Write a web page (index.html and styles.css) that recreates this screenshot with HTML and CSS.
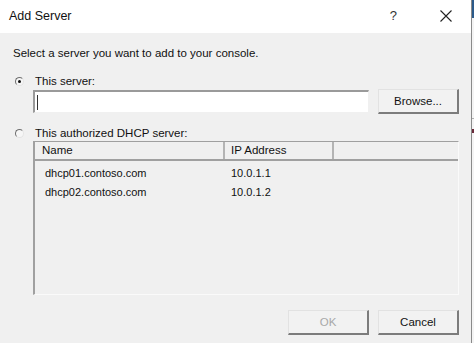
FILE: index.html
```html
<!DOCTYPE html>
<html lang="en">
<head>
  <meta charset="UTF-8">
  <title>Add Server</title>
  <link rel="stylesheet" href="styles.css">
</head>
<body>
  <div class="dialog">
    <!-- title bar -->
    <div class="titlebar">
      <span class="title">Add Server</span>
      <span class="help">?</span>
      <span class="close">
        <svg width="12" height="12" viewBox="0 0 12 12"><path d="M0.5 0.5 L11.5 11.5 M11.5 0.5 L0.5 11.5" stroke="#222" stroke-width="1.1" fill="none"/></svg>
      </span>
    </div>

    <div class="content">
      <p class="intro">Select a server you want to add to your console.</p>

      <div class="option">
        <span class="radio checked"></span>
        <span>This server:</span>
      </div>
      <div class="server-row">
        <div class="server-input"><span class="caret"></span></div>
        <button class="btn browse">Browse...</button>
      </div>

      <div class="option second">
        <span class="radio"></span>
        <span>This authorized DHCP server:</span>
      </div>

      <!-- server list -->
      <div class="listbox">
        <div class="list-head">
          <div class="col col-name">Name</div>
          <div class="col col-ip">IP Address</div>
          <div class="col col-rest"></div>
        </div>
        <div class="list-body">
          <div class="list-row"><span class="cell-name">dhcp01.contoso.com</span><span class="cell-ip">10.0.1.1</span></div>
          <div class="list-row"><span class="cell-name">dhcp02.contoso.com</span><span class="cell-ip">10.0.1.2</span></div>
        </div>
      </div>

      <div class="actions">
        <button class="btn ok" disabled>OK</button>
        <button class="btn">Cancel</button>
      </div>
    </div>
  </div>
  <div class="edge"></div>
</body>
</html>
```

FILE: styles.css
```css
/* Global */
* {
  box-sizing: border-box;
  font-family: "Liberation Sans", Arial, sans-serif;
}

body {
  margin: 0;
  width: 474px;
  height: 343px;
  display: flex;
  overflow: hidden;
  background-color: #f0f0f0;
  color: #111;
}

.dialog {
  width: 472px;
  height: 343px;
  background-color: #f0f0f0;
  border-right: 1px solid #8a8a8a;
}

/* strip of the window behind */
.edge {
  width: 2px;
  background: linear-gradient(#2b5a8a 0, #2b5a8a 18px, #f4f4f4 18px, #f4f4f4 118px, #b0b0b0 118px, #b0b0b0 119px, #f4f4f4 119px, #f4f4f4 129px, #6a2a3a 129px, #6a2a3a 133px, #f4f4f4 133px);
}

/* Title bar */
.titlebar {
  height: 33px;
  background-color: #ffffff;
  display: flex;
  align-items: center;
  padding-left: 9px;
}

.title {
  font-size: 12.5px;
  color: #111;
  flex: 1;
  padding-bottom: 1px;
}

.help {
  font-size: 13px;
  color: #333;
  margin-right: 43px;
  padding-bottom: 2px;
}

.close {
  display: flex;
  margin-right: 19px;
  padding-bottom: 1px;
}

/* Content */
.content {
  padding: 13px 12px 0 13px;
  font-size: 11.5px;
}

.intro {
  margin: 0;
  line-height: 14px;
}

.option {
  display: flex;
  align-items: center;
  margin-top: 14px;
  line-height: 14px;
}

.option.second {
  margin-top: 12px;
}

.radio {
  width: 9px;
  height: 9px;
  border-radius: 50%;
  border: 1px solid;
  border-color: #6e6e6e #e4e4e4 #e4e4e4 #6e6e6e;
  background-color: #f6f6f6;
  margin: 0 11px 0 2px;
  position: relative;
}

.radio.checked::after {
  content: "";
  position: absolute;
  left: 2px;
  top: 2px;
  width: 3px;
  height: 3px;
  border-radius: 50%;
  background-color: #111;
}

.server-row {
  display: flex;
  align-items: center;
  margin-top: 1px;
  padding-left: 20px;
  gap: 9px;
}

.server-input {
  width: 336px;
  height: 23px;
  background-color: #ffffff;
  border: 1px solid;
  border-color: #9a9a9a #f0f0f0 #f0f0f0 #9a9a9a;
  border-top-width: 2px;
  border-left-width: 2px;
  display: flex;
  align-items: center;
  padding-left: 2px;
}

.caret {
  width: 1px;
  height: 15px;
  background-color: #333;
}

/* buttons */
.btn {
  height: 25px;
  width: 81px;
  background-color: #f2f2f2;
  border: 1px solid;
  border-color: #e2e2e2 #7c7c7c #7c7c7c #e2e2e2;
  border-right-width: 2px;
  border-bottom-width: 2px;
  font-size: 11.5px;
  color: #111;
  padding: 0;
}

.btn.ok {
  color: #a8a8a8;
}

/* List */
.listbox {
  margin: 1px 0 0 20px;
  width: 426px;
  height: 154px;
  border: 1px solid;
  border-color: #a0a0a0 #fafafa #fafafa #a0a0a0;
  border-left-width: 2px;
  font-size: 11px;
}

.list-head {
  display: flex;
  height: 19px;
  border-bottom: 2px solid #a0a0a0;
}

.col {
  line-height: 17px;
  padding-left: 7px;
  font-size: 11.5px;
}

.col-name {
  width: 190px;
  border-right: 2px solid #b4b4b4;
}

.col-ip {
  width: 109px;
  padding-left: 6px;
  border-right: 2px solid #b4b4b4;
}

.col-rest {
  flex: 1;
}

.list-body {
  padding-top: 3px;
}

.list-row {
  display: flex;
  height: 19px;
  line-height: 19px;
}

.cell-name {
  width: 196px;
  padding-left: 10px;
}

.actions {
  display: flex;
  justify-content: flex-end;
  gap: 9px;
  margin-top: 15px;
}
```
